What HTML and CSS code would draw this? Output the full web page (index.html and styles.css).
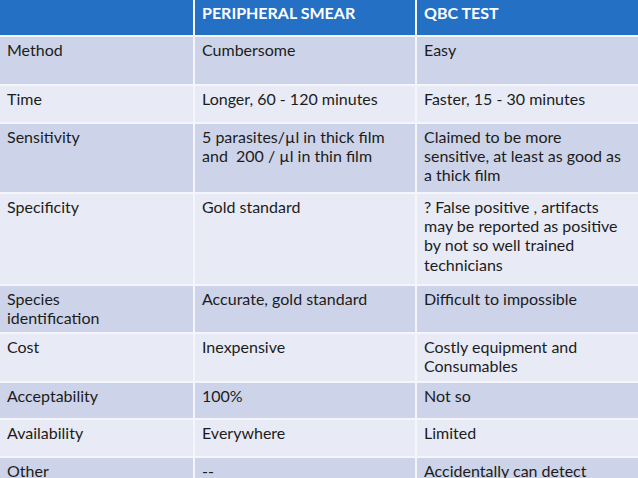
FILE: index.html
```html
<!DOCTYPE html>
<html>
<head>
<meta charset="utf-8">
<link rel="stylesheet" href="styles.css">
</head>
<body>
<div class="table">
  <div class="cell head"></div>
  <div class="cell head">PERIPHERAL SMEAR</div>
  <div class="cell head">QBC TEST</div>

  <div class="cell dark">Method</div>
  <div class="cell dark">Cumbersome</div>
  <div class="cell dark">Easy</div>

  <div class="cell light">Time</div>
  <div class="cell light">Longer, 60 - 120 minutes</div>
  <div class="cell light">Faster, 15 - 30 minutes</div>

  <div class="cell dark">Sensitivity</div>
  <div class="cell dark">5 parasites/µl in thick film<br>and&nbsp; 200 / µl in thin film</div>
  <div class="cell dark">Claimed to be more<br>sensitive, at least as good as<br>a thick film</div>

  <div class="cell light">Specificity</div>
  <div class="cell light">Gold standard</div>
  <div class="cell light">? False positive , artifacts<br>may be reported as positive<br>by not so well trained<br>technicians</div>

  <div class="cell dark">Species<br>identification</div>
  <div class="cell dark">Accurate, gold standard</div>
  <div class="cell dark">Difficult to impossible</div>

  <div class="cell light">Cost</div>
  <div class="cell light">Inexpensive</div>
  <div class="cell light">Costly equipment and<br>Consumables</div>

  <div class="cell dark">Acceptability</div>
  <div class="cell dark">100%</div>
  <div class="cell dark">Not so</div>

  <div class="cell light">Availability</div>
  <div class="cell light">Everywhere</div>
  <div class="cell light">Limited</div>

  <div class="cell dark">Other</div>
  <div class="cell dark">--</div>
  <div class="cell dark">Accidentally can detect</div>
</div>
</body>
</html>
```
FILE: styles.css
```css
html, body {
  margin: 0;
  padding: 0;
  background: #ffffff;
  overflow: hidden;
}
body {
  width: 638px;
  height: 478px;
  font-family: "Lato", "Open Sans", "DejaVu Sans", sans-serif;
  font-size: 16px;
  line-height: 19.2px;
  color: #1c1c1c;
}
.table {
  display: grid;
  grid-template-columns: 193px 220px 1fr;
  grid-template-rows: 35px 47px 36px 68px 90px 46px 47px 35px 36px 40px;
  gap: 2px;
  background: #f4f6fb;
  height: 478px;
  overflow: hidden;
}
.cell {
  padding: 3px 6px 0 7px;
  white-space: nowrap;
}
.head {
  background: #2470c4;
  color: #ffffff;
  font-weight: bold;
}
.dark {
  background: #cdd4e9;
}
.light {
  background: #e8ebf5;
}
```
